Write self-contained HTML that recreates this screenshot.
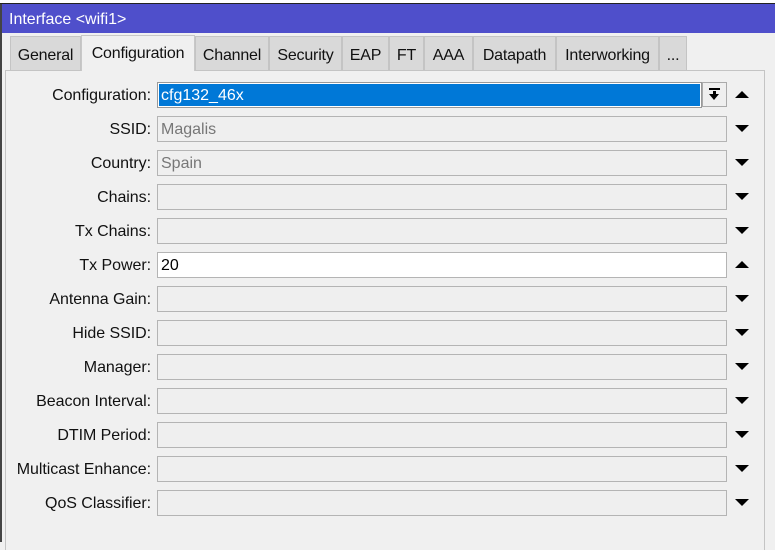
<!DOCTYPE html>
<html><head><style>
*{margin:0;padding:0;box-sizing:border-box}
body{width:775px;height:542px;overflow:hidden;background:#f0f0f0;font-family:"Liberation Sans",Arial,sans-serif;font-size:16px;position:relative}
.top{position:absolute;left:0;top:0;width:775px;height:4px;background:#fff;border-bottom:1px solid #222}
.title{position:absolute;left:2px;top:4px;width:773px;height:29px;background:#4f4fcb;color:#fff;padding:7px 0 0 7px}
.lb{position:absolute;left:0;top:4px;width:2px;height:538px;background:#444}
.tab{position:absolute;top:36px;height:34px;background:#d9d9d9;border:1px solid #c4c4c4;border-bottom:none;text-align:center;padding-top:10px;color:#111;letter-spacing:-0.2px}
.tab.act{top:35px;height:36px;background:#f0f0f0;border-color:#c8c8c8;padding-top:9px;z-index:2}
.panel{position:absolute;left:5px;top:70px;width:760px;height:480px;border:1px solid #c4c4c4;border-bottom:none}
.lab{position:absolute;right:624px;height:26px;line-height:28px;color:#111;text-align:right;white-space:nowrap;letter-spacing:-0.05px}
.f{position:absolute;left:157px;width:570px;height:26px;border:1px solid #b4b4b4;background:#efefef;padding-left:3px;line-height:26px;color:#777}
.ar{position:absolute;left:735px;width:0;height:0;border-left:7px solid transparent;border-right:7px solid transparent}
.dn{border-top:7px solid #000}
.up{border-bottom:7px solid #000}
</style></head><body>
<div class="top"></div>
<div class="title">Interface &lt;wifi1&gt;</div>
<div class="lb"></div>
<div class="tab" style="left:10px;width:71px">General</div>
<div class="tab act" style="left:81px;width:114px">Configuration</div>
<div class="tab" style="left:195px;width:74px">Channel</div>
<div class="tab" style="left:269px;width:73px">Security</div>
<div class="tab" style="left:342px;width:47px">EAP</div>
<div class="tab" style="left:389px;width:35px">FT</div>
<div class="tab" style="left:424px;width:49px">AAA</div>
<div class="tab" style="left:473px;width:83px">Datapath</div>
<div class="tab" style="left:556px;width:103px">Interworking</div>
<div class="tab" style="left:659px;width:28px">...</div>
<div class="panel"></div>

<div class="lab" style="top:82px">Configuration:</div>
<div class="f" style="top:82px;width:545px;background:#0078d7;color:#fff;border:1px solid #999;box-shadow:inset 0 0 0 1px #fff">cfg132_46x</div>
<div style="position:absolute;left:702px;top:82px;width:25px;height:25px;border:1px solid #aaa;background:#efefef"></div>
<div style="position:absolute;left:709px;top:88px;width:11px;height:2px;background:#000"></div>
<div style="position:absolute;left:713px;top:91px;width:3px;height:3px;background:#000"></div>
<div class="ar dn" style="left:709px;top:94px;border-left-width:5.5px;border-right-width:5.5px;border-top-width:6px"></div>
<div class="ar up" style="top:91px"></div>

<div class="lab" style="top:116px">SSID:</div><div class="f" style="top:116px">Magalis</div><div class="ar dn" style="top:125px"></div>
<div class="lab" style="top:150px">Country:</div><div class="f" style="top:150px">Spain</div><div class="ar dn" style="top:159px"></div>
<div class="lab" style="top:184px">Chains:</div><div class="f" style="top:184px"></div><div class="ar dn" style="top:193px"></div>
<div class="lab" style="top:218px">Tx Chains:</div><div class="f" style="top:218px"></div><div class="ar dn" style="top:227px"></div>
<div class="lab" style="top:252px">Tx Power:</div><div class="f" style="top:252px;background:#fff;color:#000">20</div><div class="ar up" style="top:261px"></div>
<div class="lab" style="top:286px">Antenna Gain:</div><div class="f" style="top:286px"></div><div class="ar dn" style="top:295px"></div>
<div class="lab" style="top:320px">Hide SSID:</div><div class="f" style="top:320px"></div><div class="ar dn" style="top:329px"></div>
<div class="lab" style="top:354px">Manager:</div><div class="f" style="top:354px"></div><div class="ar dn" style="top:363px"></div>
<div class="lab" style="top:388px">Beacon Interval:</div><div class="f" style="top:388px"></div><div class="ar dn" style="top:397px"></div>
<div class="lab" style="top:422px">DTIM Period:</div><div class="f" style="top:422px"></div><div class="ar dn" style="top:431px"></div>
<div class="lab" style="top:456px">Multicast Enhance:</div><div class="f" style="top:456px"></div><div class="ar dn" style="top:465px"></div>
<div class="lab" style="top:490px">QoS Classifier:</div><div class="f" style="top:490px"></div><div class="ar dn" style="top:499px"></div>
</body></html>
